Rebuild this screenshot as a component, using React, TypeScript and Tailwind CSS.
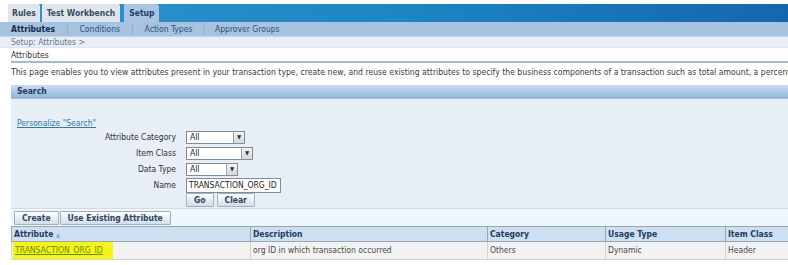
const font = "font-['DejaVu_Sans_Condensed','DejaVu_Sans',sans-serif] [font-stretch:condensed]";

const Select = ({ width, value = "All" }: { width: number; value?: string }) => (
  <div
    className="flex h-[13px] items-stretch border border-[#7f8e9e] bg-white"
    style={{ width }}
  >
    <span className="flex-1 pl-[3px] text-[8.5px] leading-[11px] text-[#222]">{value}</span>
    <span className="flex w-[11px] items-center justify-center border-l border-[#9aa6b2] bg-gradient-to-b from-[#f4f4f4] to-[#d6d6d6]">
      <span className="text-[6px] leading-none text-[#333]">▼</span>
    </span>
  </div>
);

const Btn = ({ children }: { children: React.ReactNode }) => (
  <button className="h-[14px] rounded-[1px] border border-[#9fb0c1] bg-gradient-to-b from-[#ffffff] to-[#d3dde8] px-[7px] text-[8.5px] font-bold leading-[12px] text-[#2a4466]">
    {children}
  </button>
);

const FormRow = ({ label, children }: { label: string; children: React.ReactNode }) => (
  <div className="flex h-[16px] items-center">
    <span className="w-[159px] text-right text-[8.5px] text-[#333]">{label}</span>
    <div className="ml-[10px]">{children}</div>
  </div>
);

export default function App() {
  return (
    <div className={`${font} h-[265px] w-[788px] overflow-hidden bg-white`}>
      {/* tab strip */}
      <div className="flex h-[22px] pt-[4px]">
        <div className="w-[8px] bg-white" />
        <div className="flex flex-1 bg-gradient-to-r from-[#2f92d0] via-[#1d86c3] to-[#1566ae]">
          <div className="flex h-full items-center rounded-tr-[2px] bg-[#dfe6ee] px-[4px] text-[8.5px] font-bold text-[#3b4c60]">
            Rules
          </div>
          <div className="w-[2px]" />
          <div className="flex h-full items-center rounded-tr-[2px] bg-[#dfe6ee] px-[5px] text-[8.5px] font-bold text-[#3b4c60]">
            Test Workbench
          </div>
          <div className="w-[4px]" />
          <div className="flex h-full items-center rounded-tr-[3px] bg-[#a9c5e1] px-[5px] text-[8.5px] font-bold text-[#1c3d6a]">
            Setup
          </div>
        </div>
      </div>

      {/* sub nav */}
      <div className="flex h-[15px] items-center border-b border-[#c3d5e8] bg-[#a7c3df] pl-[11px] text-[8.5px]">
        <span className="font-bold text-[#13294b]">Attributes</span>
        <span className="mx-[11px] text-[#7f9ec2]">|</span>
        <span className="text-[#2f4e78]">Conditions</span>
        <span className="mx-[11px] text-[#7f9ec2]">|</span>
        <span className="text-[#2f4e78]">Action Types</span>
        <span className="mx-[10px] text-[#7f9ec2]">|</span>
        <span className="text-[#2f4e78]">Approver Groups</span>
      </div>

      {/* breadcrumb */}
      <div className="flex h-[11px] items-center border-b border-[#dfe6ef] bg-[#e9eef6] pl-[11px] text-[8.5px] text-[#5c7899]">
        Setup: Attributes &gt;
      </div>

      {/* page header */}
      <div className="pl-[11px]">
        <div className="mt-[2px] border-b-2 border-[#a8b7cb] pb-[1px] text-[8.5px] leading-[10px] text-[#333]">
          Attributes
        </div>
        <p className="mt-[4px] whitespace-nowrap text-[8.6px] leading-[10px] text-[#3b3b3b]">
          This page enables you to view attributes present in your transaction type, create new, and reuse existing
          attributes to specify the business components of a transaction such as total amount, a percent
        </p>

        {/* search region */}
        <div className="mt-[8px]">
          <div className="flex h-[14px] items-center border-b border-[#a7bfd6] bg-gradient-to-b from-[#c9ddf0] to-[#90b5d9] pl-[6px] text-[8.5px] font-bold text-[#1e3a5c]">
            Search
          </div>
          <div className="bg-[#e8eef5] pl-[6px] pt-[19px]">
            <a className="block text-[8.5px] leading-[11px] text-[#2b7ba3] underline">Personalize "Search"</a>
            <FormRow label="Attribute Category">
              <Select width={59} />
            </FormRow>
            <FormRow label="Item Class">
              <Select width={67} />
            </FormRow>
            <FormRow label="Data Type">
              <Select width={52} />
            </FormRow>
            <FormRow label="Name">
              <div className="flex h-[15px] w-[95px] items-center border border-[#7f8e9e] bg-white pl-[2px] text-[8.5px] text-[#222]">
                TRANSACTION_ORG_ID
              </div>
            </FormRow>
            <div className="ml-[169px] flex h-[15px] items-start gap-[3px]">
              <Btn>Go</Btn>
              <Btn>Clear</Btn>
            </div>
          </div>

          {/* table actions */}
          <div className="flex h-[18px] items-center gap-[1px] border-t border-[#d4dbe3] bg-[#eef5fd] pl-[3px]">
            <Btn>Create</Btn>
            <Btn>Use Existing Attribute</Btn>
          </div>

          {/* results table */}
          <table className="w-[800px] table-fixed border-collapse text-[8.5px]">
            <colgroup>
              <col className="w-[239px]" />
              <col className="w-[237px]" />
              <col className="w-[118px]" />
              <col className="w-[120px]" />
              <col />
            </colgroup>
            <thead>
              <tr className="h-[15px] bg-[#cddff0] text-left font-bold text-[#1f3b5e]">
                <th className="border border-[#9aa6b2] pl-[2px]">
                  Attribute <span className="text-[6px] text-[#8eaacb]">▲</span>
                </th>
                <th className="border border-[#9aa6b2] pl-[2px]">Description</th>
                <th className="border border-[#9aa6b2] pl-[2px]">Category</th>
                <th className="border border-[#9aa6b2] pl-[2px]">Usage Type</th>
                <th className="border border-[#9aa6b2] pl-[2px]">Item Class</th>
              </tr>
            </thead>
            <tbody>
              <tr className="h-[18px] bg-[#f2f2f3] text-[#4a4a4a]">
                <td className="border border-[#d3d3d3] pl-[1px]">
                  <span className="inline-block bg-[#f4f514] px-[2px] py-[3px] pr-[10px] leading-[11px] text-[#6a8c22] underline">
                    TRANSACTION_ORG_ID
                  </span>
                </td>
                <td className="border border-[#d3d3d3] pl-[2px]">org ID in which transaction occurred</td>
                <td className="border border-[#d3d3d3] pl-[2px]">Others</td>
                <td className="border border-[#d3d3d3] pl-[2px]">Dynamic</td>
                <td className="border border-[#d3d3d3] pl-[2px]">Header</td>
              </tr>
            </tbody>
          </table>
        </div>
      </div>
    </div>
  );
}
